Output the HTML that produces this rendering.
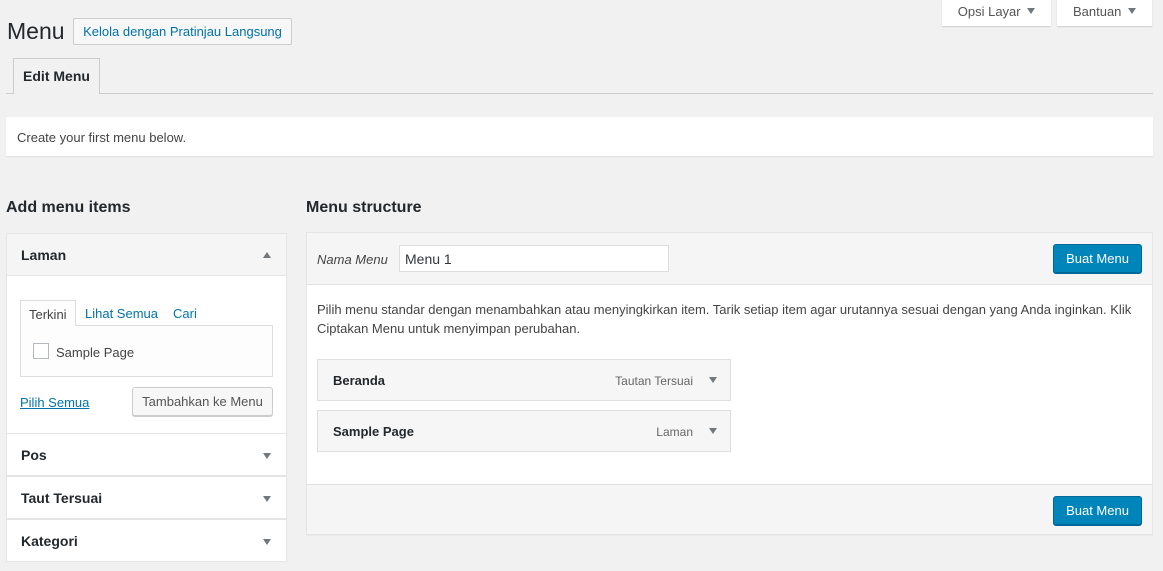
<!DOCTYPE html>
<html><head><meta charset="utf-8"><style>
*{box-sizing:border-box;margin:0;padding:0}
body{width:1163px;height:571px;background:#f1f1f1;font-family:"Liberation Sans",sans-serif;font-size:13px;color:#23282d;position:relative;overflow:hidden}
.a{position:absolute}
.btn{position:absolute;border:1px solid #ccc;background:#f7f7f7;border-radius:3px;box-shadow:0 1px 0 #ccc;color:#555;text-align:center}
.pri{position:absolute;background:#0085ba;border:1px solid #006799;border-radius:3px;color:#fff;text-align:center;box-shadow:0 1px 0 #006799;line-height:27px;width:89px;height:29px}
.tri{display:inline-block;width:0;height:0;border-left:4px solid transparent;border-right:4px solid transparent;border-top:6px solid #72777c}
.tri.up{border-top:0;border-bottom:6px solid #72777c}
.sec{position:absolute;left:6px;width:281px;height:43px;background:#fff;border:1px solid #e5e5e5;border-top:0;font-weight:bold;font-size:14px;padding:13px 14px;}
.item{position:absolute;left:317px;width:414px;height:42px;background:#f6f6f6;border:1px solid #dfdfdf;font-weight:bold;padding:13px 15px;}
</style></head><body>
<div class="a" style="left:942px;top:0;width:109px;height:26px;background:#fff;box-shadow:0 1px 1px rgba(0,0,0,.15);color:#555;text-align:center;line-height:24px">Opsi Layar <span class="tri" style="vertical-align:2px;margin-left:3px"></span></div>
<div class="a" style="left:1057px;top:0;width:95px;height:26px;background:#fff;box-shadow:0 1px 1px rgba(0,0,0,.15);color:#555;text-align:center;line-height:24px">Bantuan <span class="tri" style="vertical-align:2px;margin-left:3px"></span></div>
<div class="a" style="left:7px;top:18px;font-size:23px;font-weight:normal">Menu</div>
<div class="a" style="left:73px;top:18px;width:219px;height:27px;border:1px solid #ccc;background:#f7f7f7;border-radius:2px;color:#0073aa;line-height:25px;text-align:center;font-size:13px">Kelola dengan Pratinjau Langsung</div>
<div class="a" style="left:6px;top:93px;width:1147px;border-top:1px solid #ccc"></div>
<div class="a" style="left:13px;top:58px;width:87px;height:36px;background:#f1f1f1;border:1px solid #ccc;border-bottom:0;font-weight:bold;font-size:14px;text-align:center;line-height:34px">Edit Menu</div>
<div class="a" style="left:6px;top:117px;width:1147px;height:39px;background:#fff;box-shadow:0 1px 1px rgba(0,0,0,.08);padding:13px 11px;color:#444">Create your first menu below.</div>
<div class="a" style="left:6px;top:199px;font-size:16px;font-weight:bold">Add menu items</div>
<div class="a" style="left:306px;top:199px;font-size:16px;font-weight:bold">Menu structure</div>
<div class="a" style="left:6px;top:233px;width:281px;height:43px;background:#f5f5f5;border:1px solid #e5e5e5;font-weight:bold;font-size:14px;padding:13px 14px">Laman<span class="tri up" style="position:absolute;right:15px;top:18px"></span></div>
<div class="a" style="left:6px;top:276px;width:281px;height:158px;background:#fff;border:1px solid #e5e5e5;border-top:0"></div>
<div class="a" style="left:20px;top:325px;width:253px;height:52px;background:#fdfdfd;border:1px solid #ddd"></div>
<div class="a" style="left:20px;top:300px;width:56px;height:26px;background:#fdfdfd;border:1px solid #ddd;border-bottom:0;padding:6px 8px;color:#444">Terkini</div>
<div class="a" style="left:85px;top:306px;color:#0073aa">Lihat Semua</div>
<div class="a" style="left:173px;top:306px;color:#0073aa">Cari</div>
<div class="a" style="left:33px;top:343px;width:16px;height:16px;border:1px solid #b4b9be;background:#fff"></div>
<div class="a" style="left:56px;top:345px;color:#444">Sample Page</div>
<div class="a" style="left:20px;top:395px;color:#0073aa;text-decoration:underline">Pilih Semua</div>
<div class="btn" style="left:132px;top:387px;width:141px;height:29px;line-height:27px">Tambahkan ke Menu</div>
<div class="sec" style="top:433px;border-top:1px solid #e5e5e5">Pos<span class="tri" style="position:absolute;right:15px;top:19px"></span></div>
<div class="sec" style="top:476px;border-top:1px solid #e5e5e5">Taut Tersuai<span class="tri" style="position:absolute;right:15px;top:19px"></span></div>
<div class="sec" style="top:519px;border-top:1px solid #e5e5e5">Kategori<span class="tri" style="position:absolute;right:15px;top:19px"></span></div>
<div class="a" style="left:306px;top:232px;width:847px;height:303px;background:#fff;border:1px solid #e5e5e5;box-shadow:0 1px 1px rgba(0,0,0,.04)"></div>
<div class="a" style="left:307px;top:233px;width:845px;height:52px;background:#f5f5f5;border-bottom:1px solid #dfdfdf"></div>
<div class="a" style="left:317px;top:252px;font-style:italic;color:#444">Nama Menu</div>
<div class="a" style="left:399px;top:245px;width:270px;height:27px;background:#fff;border:1px solid #ddd;padding:5px 5px;font-size:14px;color:#32373c">Menu 1</div>
<div class="pri" style="left:1053px;top:244px">Buat Menu</div>
<div class="a" style="left:317px;top:300px;width:830px;line-height:19px;color:#444">Pilih menu standar dengan menambahkan atau menyingkirkan item. Tarik setiap item agar urutannya sesuai dengan yang Anda inginkan. Klik Ciptakan Menu untuk menyimpan perubahan.</div>
<div class="item" style="top:359px">Beranda<span class="a" style="right:37px;top:14px;font-weight:normal;font-size:12px;color:#666">Tautan Tersuai</span><span class="tri" style="position:absolute;right:13px;top:17px"></span></div>
<div class="item" style="top:410px">Sample Page<span class="a" style="right:37px;top:14px;font-weight:normal;font-size:12px;color:#666">Laman</span><span class="tri" style="position:absolute;right:13px;top:17px"></span></div>
<div class="a" style="left:307px;top:484px;width:845px;height:50px;background:#f5f5f5;border-top:1px solid #dfdfdf"></div>
<div class="pri" style="left:1053px;top:496px">Buat Menu</div>
</body></html>
